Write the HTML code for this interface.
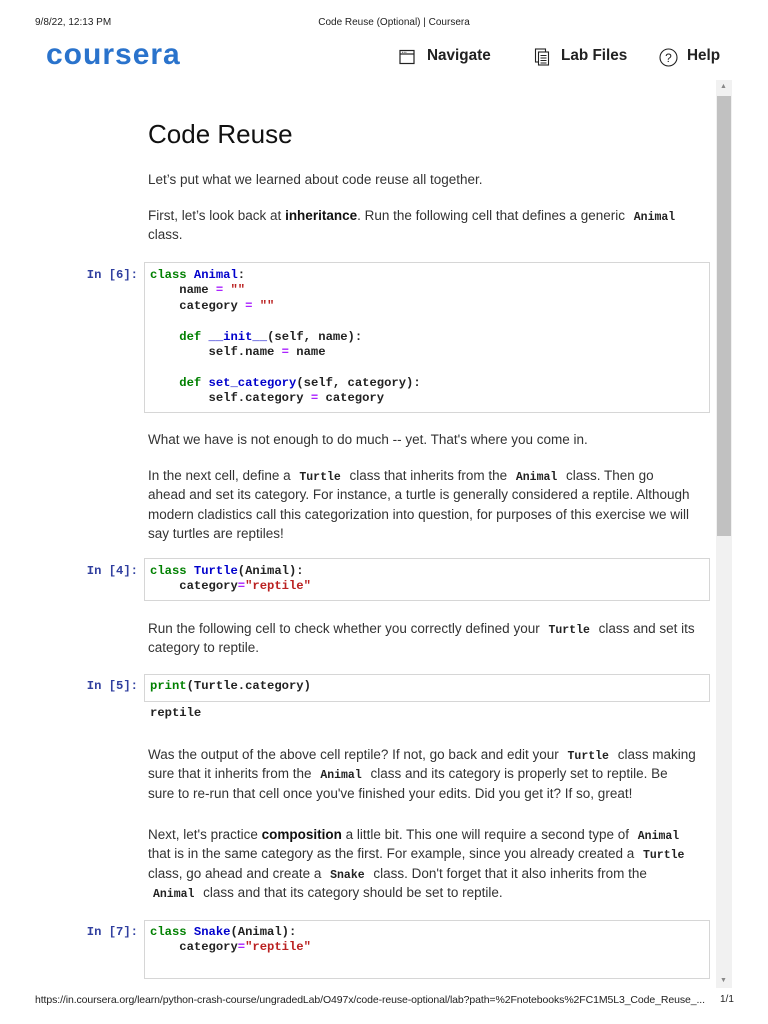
<!DOCTYPE html>
<html><head><meta charset="utf-8"><style>
*{margin:0;padding:0;box-sizing:border-box}
body{width:768px;height:1024px;background:#fff;position:relative;overflow:hidden;font-family:"Liberation Sans",Arial,sans-serif;color:#222}
.a{position:absolute;white-space:nowrap}
.p{position:absolute;left:148px;font-size:13.5px;line-height:19.4px;color:#333;white-space:nowrap}
.p b{color:#111}
.ic{font-family:"Liberation Mono",monospace;font-weight:bold;font-size:11.5px;line-height:10px;color:#222;padding:0 5px}
.cell{position:absolute;left:144px;width:566px;border:1px solid #d6d6d6;background:#fff}
.code{position:absolute;left:150px;font-family:"Liberation Mono",monospace;font-weight:bold;font-size:12.2px;line-height:15.4px;color:#222;white-space:pre}
.lbl{position:absolute;right:630px;font-family:"Liberation Mono",monospace;font-weight:bold;font-size:12.2px;color:#303f9f;white-space:pre}
.k{color:#008000}.n{color:#0000cc}.s{color:#ba2121}.o{color:#aa22ff}
</style></head><body>
<div class="a" style="left:35px;top:17px;font-size:10px;color:#222">9/8/22, 12:13 PM</div>
<div class="a" style="left:249px;top:17px;font-size:10px;color:#222;width:290px;text-align:center">Code Reuse (Optional) | Coursera</div>
<div class="a" style="left:46px;top:38px;font-size:30px;font-weight:bold;color:#2a73cc;letter-spacing:1px">coursera</div>

<svg class="a" style="left:399px;top:49px" width="16" height="16" viewBox="0 0 16 16"><rect x="1" y="1.5" width="14" height="13" fill="none" stroke="#222" stroke-width="1.2"/><line x1="1" y1="5" x2="15" y2="5" stroke="#222" stroke-width="1.2"/><circle cx="3.5" cy="3.2" r=".5" fill="#222"/><circle cx="5.2" cy="3.2" r=".5" fill="#222"/><circle cx="6.9" cy="3.2" r=".5" fill="#222"/></svg>
<div class="a" style="left:427px;top:47px;font-size:15.3px;font-weight:bold;color:#222">Navigate</div>
<svg class="a" style="left:534px;top:48px" width="16" height="18" viewBox="0 0 16 18"><rect x="1.5" y="1" width="10" height="13" fill="none" stroke="#222" stroke-width="1.1"/><rect x="4.5" y="4" width="10" height="13" fill="#fff" stroke="#222" stroke-width="1.1"/><line x1="6.5" y1="7.5" x2="12.5" y2="7.5" stroke="#222"/><line x1="6.5" y1="10" x2="12.5" y2="10" stroke="#222"/><line x1="6.5" y1="12.5" x2="12.5" y2="12.5" stroke="#222"/><line x1="6.5" y1="15" x2="12.5" y2="15" stroke="#222"/></svg>
<div class="a" style="left:561px;top:47px;font-size:15.3px;font-weight:bold;color:#222">Lab Files</div>
<svg class="a" style="left:659px;top:48px" width="19" height="19" viewBox="0 0 19 19"><circle cx="9.5" cy="9.5" r="8.5" fill="none" stroke="#222" stroke-width="1.1"/><text x="9.5" y="14" font-size="12" text-anchor="middle" font-family="Liberation Sans" fill="#222">?</text></svg>
<div class="a" style="left:687px;top:47px;font-size:15.3px;font-weight:bold;color:#222">Help</div>

<div class="a" style="left:716px;top:80px;width:16px;height:908px;background:#f1f1f1"></div>
<div class="a" style="left:717px;top:96px;width:14px;height:440px;background:#c1c1c1"></div>
<div class="a" style="left:720px;top:83px;font-size:7px;color:#888">▲</div>
<div class="a" style="left:720px;top:977px;font-size:7px;color:#888">▼</div>

<div class="a" style="left:148px;top:119px;font-size:26px;color:#111">Code Reuse</div>
<div class="p" style="top:170px">Let’s put what we learned about code reuse all together.</div>
<div class="p" style="top:206px">First, let’s look back at <b>inheritance</b>. Run the following cell that defines a generic <span class="ic">Animal</span><br>class.</div>

<div class="lbl" style="top:268px">In [6]:</div>
<div class="cell" style="top:262px;height:151px"></div>
<div class="code" style="top:268px"><span class="k">class</span> <span class="n">Animal</span>:
    name <span class="o">=</span> <span class="s">""</span>
    category <span class="o">=</span> <span class="s">""</span>

    <span class="k">def</span> <span class="n">__init__</span>(self, name):
        self.name <span class="o">=</span> name

    <span class="k">def</span> <span class="n">set_category</span>(self, category):
        self.category <span class="o">=</span> category</div>

<div class="p" style="top:430px">What we have is not enough to do much -- yet. That's where you come in.</div>
<div class="p" style="top:466px">In the next cell, define a <span class="ic">Turtle</span> class that inherits from the <span class="ic">Animal</span> class. Then go<br>ahead and set its category. For instance, a turtle is generally considered a reptile. Although<br>modern cladistics call this categorization into question, for purposes of this exercise we will<br>say turtles are reptiles!</div>

<div class="lbl" style="top:564px">In [4]:</div>
<div class="cell" style="top:558px;height:43px"></div>
<div class="code" style="top:564px"><span class="k">class</span> <span class="n">Turtle</span>(Animal):
    category<span class="o">=</span><span class="s">"reptile"</span></div>

<div class="p" style="top:619px">Run the following cell to check whether you correctly defined your <span class="ic">Turtle</span> class and set its<br>category to reptile.</div>

<div class="lbl" style="top:679px">In [5]:</div>
<div class="cell" style="top:674px;height:28px"></div>
<div class="code" style="top:679px"><span class="k">print</span>(Turtle.category)</div>
<div class="code" style="top:706px">reptile</div>

<div class="p" style="top:745px">Was the output of the above cell reptile? If not, go back and edit your <span class="ic">Turtle</span> class making<br>sure that it inherits from the <span class="ic">Animal</span> class and its category is properly set to reptile. Be<br>sure to re-run that cell once you've finished your edits. Did you get it? If so, great!</div>
<div class="p" style="top:825px">Next, let's practice <b>composition</b> a little bit. This one will require a second type of <span class="ic">Animal</span><br>that is in the same category as the first. For example, since you already created a <span class="ic">Turtle</span><br>class, go ahead and create a <span class="ic">Snake</span> class. Don't forget that it also inherits from the<br><span class="ic">Animal</span> class and that its category should be set to reptile.</div>

<div class="lbl" style="top:925px">In [7]:</div>
<div class="cell" style="top:920px;height:59px"></div>
<div class="code" style="top:925px"><span class="k">class</span> <span class="n">Snake</span>(Animal):
    category<span class="o">=</span><span class="s">"reptile"</span></div>

<div class="a" style="left:35px;top:994px;font-size:10.5px;color:#222;letter-spacing:-0.1px">https://in.coursera.org/learn/python-crash-course/ungradedLab/O497x/code-reuse-optional/lab?path=%2Fnotebooks%2FC1M5L3_Code_Reuse_...</div>
<div class="a" style="left:720px;top:994px;font-size:10px;color:#222">1/1</div>
</body></html>
